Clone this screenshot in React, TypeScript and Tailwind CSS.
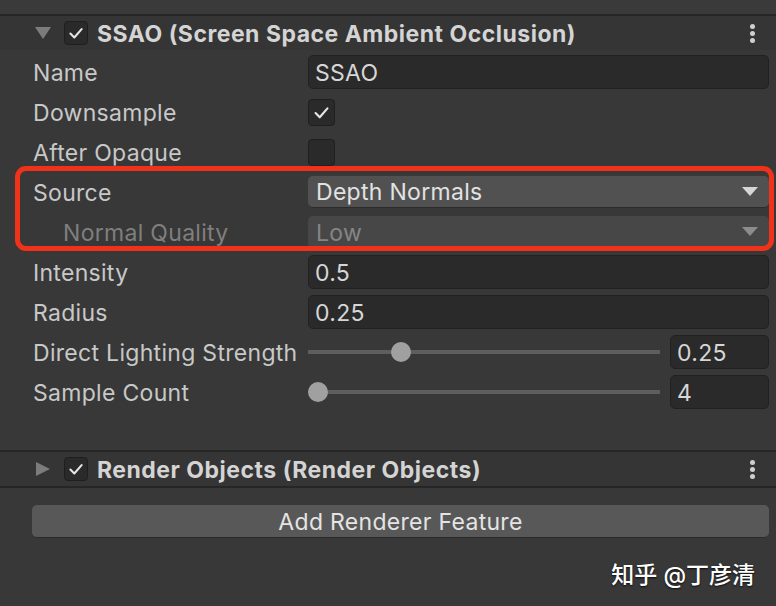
import React from 'react';

const font = { fontFamily: 'Inter, "Noto Sans", "Noto Sans CJK SC", sans-serif' };

function Check({ size = 16 }: { size?: number }) {
  return (
    <svg width={size} height={size} viewBox="0 0 16 16" fill="none">
      <polyline points="3,8.5 6.5,12 13,4.5" stroke="#e6e6e6" strokeWidth="1.8" strokeLinecap="round" strokeLinejoin="round" />
    </svg>
  );
}

function Checkbox({ checked, small }: { checked: boolean; small?: boolean }) {
  return (
    <div
      className={
        (small ? 'w-[24px] h-[24px] rounded-[4px]' : 'w-[27px] h-[27px] rounded-[4px]') +
        ' bg-[#2a2a2a] border border-[#1f1f1f] flex items-center justify-center'
      }
    >
      {checked && <Check size={small ? 18 : 19} />}
    </div>
  );
}

function Kebab() {
  return (
    <div className="flex flex-col gap-[2px] items-center">
      <span className="w-[5px] h-[5px] rounded-full bg-[#cfcfcf]" />
      <span className="w-[5px] h-[5px] rounded-full bg-[#cfcfcf]" />
      <span className="w-[5px] h-[5px] rounded-full bg-[#cfcfcf]" />
    </div>
  );
}

function FeatureHeader({ title, open }: { title: string; open: boolean }) {
  return (
    <div className="h-[34px] bg-[#353535] flex items-center pl-[34px] pr-[21px]">
      <svg width="18" height="16" viewBox="0 0 18 16" className="mr-[12px]">
        {open ? <polygon points="1,2 17,2 9,14" fill="#7c7c7c" /> : <polygon points="2,1 16,8 2,15" fill="#7c7c7c" />}
      </svg>
      <Checkbox checked small />
      <span className="ml-[9px] pt-[2px] text-[23px] font-bold tracking-[0.5px] text-[#d4d4d4] leading-none">{title}</span>
      <div className="ml-auto">
        <Kebab />
      </div>
    </div>
  );
}

function Row({ label, dim, children }: { label: string; dim?: boolean; children: React.ReactNode }) {
  return (
    <div className="h-[40px] flex items-center pl-[33px] pr-[7px]">
      <div
        className={
          'w-[275px] shrink-0 pt-[2px] text-[23px] tracking-[0.3px] leading-none ' +
          (dim ? 'pl-[30px] text-[#7f7f7f]' : 'text-[#c8c8c8]')
        }
      >
        {label}
      </div>
      <div className="flex-1 flex items-center">{children}</div>
    </div>
  );
}

function TextField({ value }: { value: string }) {
  return (
    <div className="w-full h-[34px] bg-[#2a2a2a] border border-[#212121] rounded-[5px] flex items-center px-[6px] pt-[2px] text-[23px] tracking-[0.3px] text-[#d6d6d6]">
      {value}
    </div>
  );
}

function Dropdown({ value, disabled }: { value: string; disabled?: boolean }) {
  return (
    <div
      className={
        'w-full h-[32px] rounded-[5px] flex items-center pl-[8px] pr-[11px] text-[23px] tracking-[0.3px] ' +
        (disabled ? 'bg-[#474747] text-[#858585]' : 'bg-[#515151] text-[#e2e2e2] border-b border-[#2b2b2b]')
      }
    >
      <span className="pt-[2px]">{value}</span>
      <svg width="16" height="10" viewBox="0 0 16 10" className="ml-auto">
        <polygon points="0,0 16,0 8,9" fill={disabled ? '#8c8c8c' : '#d6d6d6'} />
      </svg>
    </div>
  );
}

function Slider({ value, thumb }: { value: string; thumb: number }) {
  return (
    <div className="w-full flex items-center gap-[10px]">
      <div className="relative flex-1 h-[20px] flex items-center">
        <div className="w-full h-[4px] bg-[#5e5e5e]" />
        <div
          className="absolute top-0 w-[20px] h-[20px] rounded-full bg-[#a0a0a0]"
          style={{ left: thumb }}
        />
      </div>
      <div className="w-[99px] h-[34px] bg-[#2a2a2a] border border-[#212121] rounded-[5px] flex items-center px-[6px] pt-[2px] text-[23px] tracking-[0.3px] text-[#d6d6d6]">
        {value}
      </div>
    </div>
  );
}

export default function App() {
  return (
    <div className="w-[776px] h-[606px] bg-[#383838] overflow-hidden" style={font}>
      <div className="h-[14px] bg-[#3a3a3a]" />
      <div className="h-[2px] bg-[#262626]" />
      <FeatureHeader title="SSAO (Screen Space Ambient Occlusion)" open />
      <div className="pt-[2px]">
        <Row label="Name">
          <TextField value="SSAO" />
        </Row>
        <Row label="Downsample">
          <Checkbox checked />
        </Row>
        <Row label="After Opaque">
          <Checkbox checked={false} />
        </Row>
        <div className="relative">
          <Row label="Source">
            <Dropdown value="Depth Normals" />
          </Row>
          <Row label="Normal Quality" dim>
            <Dropdown value="Low" disabled />
          </Row>
          <div className="absolute left-[15px] top-[-6px] w-[759px] h-[85px] border-[5px] border-[#f0321a] rounded-[11px] pointer-events-none" />
        </div>
        <Row label="Intensity">
          <TextField value="0.5" />
        </Row>
        <Row label="Radius">
          <TextField value="0.25" />
        </Row>
        <Row label="Direct Lighting Strength">
          <Slider value="0.25" thumb={83} />
        </Row>
        <Row label="Sample Count">
          <Slider value="4" thumb={0} />
        </Row>
      </div>
      <div className="h-[38px]" />
      <div className="h-[2px] bg-[#262626]" />
      <FeatureHeader title="Render Objects (Render Objects)" open={false} />
      <div className="h-[2px] bg-[#262626]" />
      <div className="pt-[17px] pl-[32px] pr-[7px]">
        <div className="h-[33px] bg-[#585858] rounded-[5px] border-b border-[#2a2a2a] flex items-center justify-center pt-[2px] text-[23px] tracking-[0.3px] text-[#e4e4e4]">
          Add Renderer Feature
        </div>
      </div>
      <div className="pt-[20px] pr-[21px] text-right text-[23px] font-medium text-white [text-shadow:0_1px_2px_rgba(0,0,0,0.8)]">
        知乎 @丁彦清
      </div>
    </div>
  );
}
